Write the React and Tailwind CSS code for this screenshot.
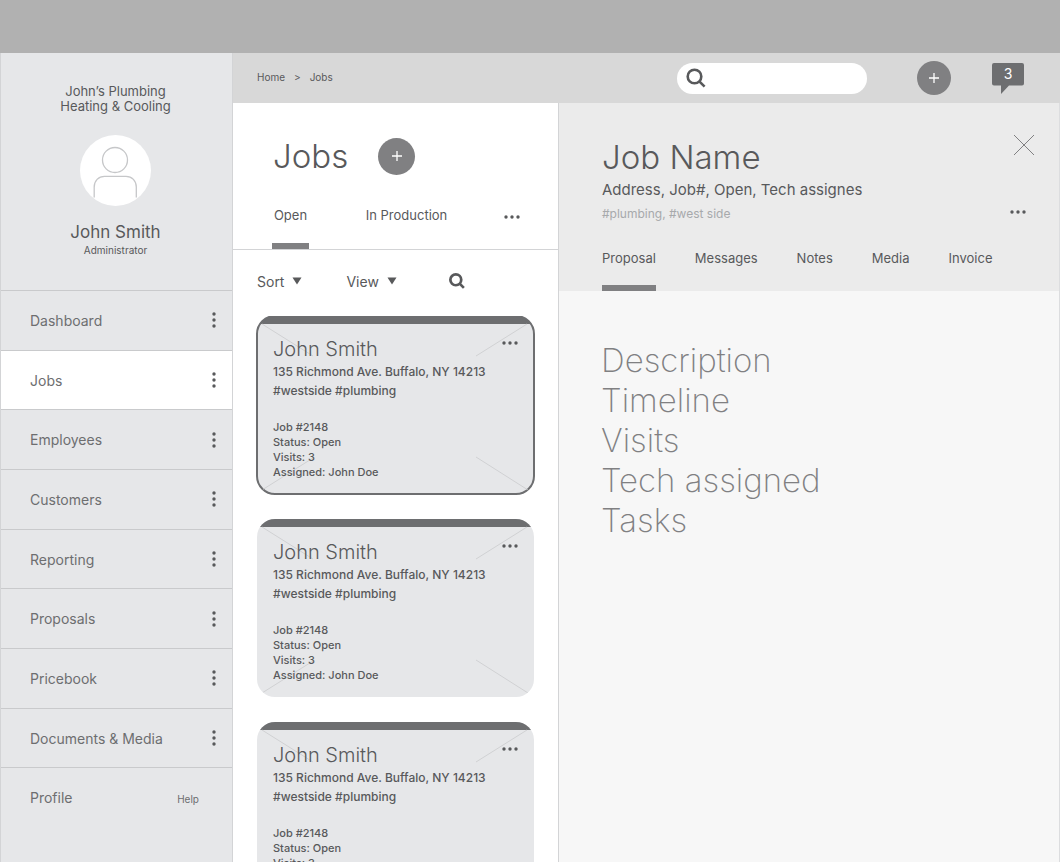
// App.jsx
import React from 'react';

const navItems = [
  'Dashboard',
  'Jobs',
  'Employees',
  'Customers',
  'Reporting',
  'Proposals',
  'Pricebook',
  'Documents & Media',
];

const jobs = [
  { id: 1, selected: true },
  { id: 2, selected: false },
  { id: 3, selected: false },
].map((job) => ({
  ...job,
  customer: 'John Smith',
  address: '135 Richmond Ave. Buffalo, NY 14213',
  tags: '#westside #plumbing',
  number: '#2148',
  status: 'Open',
  visits: 3,
  assigned: 'John Doe',
}));

const sections = ['Description', 'Timeline', 'Visits', 'Tech assigned', 'Tasks'];

const Dots = ({ vertical = false }) => (
  <svg
    className={vertical ? 'h-4 w-1' : 'h-1 w-4'}
    viewBox={vertical ? '0 0 4 16' : '0 0 16 4'}
    fill="currentColor"
    aria-hidden="true"
  >
    {[2, 8, 14].map((n) => (
      <circle key={n} cx={vertical ? 2 : n} cy={vertical ? n : 2} r="1.7" />
    ))}
  </svg>
);

const SearchIcon = ({ className, strokeWidth }) => (
  <svg
    className={className}
    viewBox="0 0 20 20"
    fill="none"
    stroke="currentColor"
    strokeWidth={strokeWidth}
    aria-hidden="true"
  >
    <circle cx="8.5" cy="8.5" r="6.8" />
    <path d="M13.3 13.3 L18.6 18.6" />
  </svg>
);

const PlusIcon = () => (
  <svg className="size-3" viewBox="0 0 12 12" stroke="currentColor" strokeWidth="1.3" aria-hidden="true">
    <path d="M6 1V11M1 6H11" />
  </svg>
);

const Caret = () => (
  <svg className="h-2 w-[10px]" viewBox="0 0 10 8" fill="currentColor" aria-hidden="true">
    <path d="M0.5 0.5H9.5L5 7.5Z" />
  </svg>
);

const Sidebar = () => (
  <aside className="w-[233px] shrink-0 border-x border-x-[#d3d4d6] bg-[#e6e7e9]">
    <div className="flex h-[237px] flex-col items-center pt-[31px] pr-0.5 text-center">
      <p className="text-[13px] leading-[15px]">
        John’s Plumbing
        <br />
        Heating &amp; Cooling
      </p>
      <svg className="mt-[21px] size-[71px]" viewBox="0 0 71 71" fill="none" aria-hidden="true">
        <circle cx="35.5" cy="35.5" r="35.5" fill="#fff" />
        <g stroke="#c6c7c9" strokeWidth="1.3">
          <circle cx="35" cy="25" r="12.5" />
          <path d="M14.2 62.5V52C14.2 46 18.5 41.3 24.5 41.3H46C52 41.3 56.3 46 56.3 52V62.5" />
        </g>
      </svg>
      <p className="mt-4 text-[17px] leading-5">John Smith</p>
      <p className="text-[10px] leading-4">Administrator</p>
    </div>
    <nav className="flex h-[537px] flex-col">
      {navItems.map((item) => (
        <div
          key={item}
          className={`flex flex-1 items-center justify-between border-t border-[#c9cacc] pr-4 pl-[29px] text-[#6d6e70] ${
            item === 'Jobs' ? 'bg-white' : ''
          }`}
        >
          <a href="#" className="text-[14px]">{item}</a>
          <button type="button" aria-label={`${item} options`} className="text-[#58595b]">
            <Dots vertical />
          </button>
        </div>
      ))}
      <div className="flex flex-1 items-center justify-between border-t border-[#c9cacc] pr-[33px] pl-[29px] text-[#6d6e70]">
        <a href="#" className="text-[14px]">Profile</a>
        <a href="#" className="pt-1 text-[10px]">Help</a>
      </div>
    </nav>
  </aside>
);

const Header = () => (
  <header className="flex h-[50px] shrink-0 items-center bg-[#d8d8d8] pr-9 pl-6">
    <div className="flex gap-[9px] pb-0.5 text-[10px]">
      <a href="#">Home</a>
      <span>&gt;</span>
      <a href="#">Jobs</a>
    </div>
    <label className="ml-auto flex h-[31px] w-[190px] items-center rounded-full bg-white pl-[9px]">
      <SearchIcon className="size-5" strokeWidth="2.6" />
      <input type="text" aria-label="Search" className="ml-2 w-36 text-[14px] outline-none" />
    </label>
    <button
      type="button"
      aria-label="Add"
      className="ml-[50px] flex size-[34px] items-center justify-center rounded-full bg-[#808082] text-white"
    >
      <PlusIcon />
    </button>
    <button type="button" className="relative ml-[41px] h-8 w-8 text-[14px] text-white">
      <svg className="absolute inset-0 size-8" viewBox="0 0 32 32" fill="#6d6e70" aria-hidden="true">
        <path d="M2 1H30Q32 1 32 3V21.5Q32 23.5 30 23.5H17L9 32V23.5H2Q0 23.5 0 21.5V3Q0 1 2 1Z" />
      </svg>
      <span className="relative block pb-2 leading-6">3</span>
    </button>
  </header>
);

const JobCard = ({ job }) => (
  <article
    className={`relative shrink-0 overflow-hidden rounded-[18px] bg-[#e6e7e9] ${
      job.selected ? 'outline-2 -outline-offset-1 outline-[#6d6e70]' : ''
    }`}
  >
    <div className="h-2 bg-[#6d6e70]" />
    <svg
      className="absolute inset-0 size-full"
      viewBox="0 0 277 178"
      preserveAspectRatio="none"
      stroke="#d0d1d3"
      fill="none"
      aria-hidden="true"
    >
      <path d="M5 8L56 40M270 8L219 40M5 174L56 142M271 174L219 141" />
    </svg>
    <div className="relative px-4 pt-[13px] pb-[14px] font-medium">
      <div className="flex items-start justify-between">
        <h3 className="text-[20px] leading-6 font-light">{job.customer}</h3>
        <button type="button" aria-label="Job options" className="flex h-3 items-center">
          <Dots />
        </button>
      </div>
      <div className="pt-px text-[12px] leading-[19px]">
        <p>{job.address}</p>
        <p>{job.tags}</p>
      </div>
      <div className="mt-5 text-[11px] leading-[15px]">
        <p>Job {job.number}</p>
        <p>Status: {job.status}</p>
        <p>Visits: {job.visits}</p>
        <p>Assigned: {job.assigned}</p>
      </div>
    </div>
  </article>
);

const JobList = () => (
  <section className="flex w-[326px] shrink-0 flex-col border-r border-[#d3d4d6] bg-white">
    <div className="h-[147px] shrink-0 border-b border-[#d3d4d6] pr-[38px] pl-[39px]">
      <div className="flex items-center gap-[30px] pt-[33px] pl-px">
        <h1 className="text-[33px] leading-10 font-light">Jobs</h1>
        <button
          type="button"
          aria-label="Add job"
          className="flex size-[37px] items-center justify-center rounded-full bg-[#808082] text-white"
        >
          <PlusIcon />
        </button>
      </div>
      <div className="mt-[29px] flex items-start justify-between text-[13px] leading-5">
        <button type="button" className="h-11 w-[37px] border-b-[6px] border-[#808082] pb-[18px]">
          Open
        </button>
        <button type="button">In Production</button>
        <button type="button" aria-label="More tabs" className="flex h-6 items-center">
          <Dots />
        </button>
      </div>
    </div>
    <div className="flex h-[66px] shrink-0 items-center pb-1 pl-6 text-[14px]">
      <button type="button" className="flex items-center gap-2">
        Sort <Caret />
      </button>
      <button type="button" className="ml-11 flex items-center gap-2">
        View <Caret />
      </button>
      <button type="button" aria-label="Search jobs" className="ml-[52px]">
        <SearchIcon className="size-4" strokeWidth="3.4" />
      </button>
    </div>
    <div className="flex min-h-0 flex-1 flex-col gap-[25px] overflow-hidden px-6">
      {jobs.map((job) => (
        <JobCard key={job.id} job={job} />
      ))}
    </div>
  </section>
);

const JobDetail = () => (
  <section className="flex min-w-0 flex-1 flex-col border-r border-[#dcdddf] bg-[#f7f7f7]">
    <div className="h-[188px] shrink-0 bg-[#ebebeb] pr-[25px] pl-[43px]">
      <div className="flex justify-between pt-8">
        <div>
          <h2 className="text-[33px] leading-[44px] font-light">Job Name</h2>
          <p className="pt-px text-[15px] leading-5">Address, Job#, Open, Tech assignes</p>
          <p className="pt-0.5 text-[12px] leading-6 text-[#a7a9ab]">#plumbing, #west side</p>
        </div>
        <div className="flex flex-col items-end">
          <button type="button" aria-label="Close">
            <svg className="size-5" viewBox="0 0 20 20" stroke="#808082" aria-hidden="true">
              <path d="M0 0L20 20M20 0L0 20" />
            </svg>
          </button>
          <button type="button" aria-label="Job options" className="mt-[55px] mr-2">
            <Dots />
          </button>
        </div>
      </div>
      <div className="mt-[22px] flex items-start gap-[39px] text-[13px] leading-5">
        <button type="button" className="h-[43px] border-b-[6px] border-[#808082] pb-[17px]">Proposal</button>
        <button type="button">Messages</button>
        <button type="button">Notes</button>
        <button type="button">Media</button>
        <button type="button">Invoice</button>
      </div>
    </div>
    <ul className="px-[42px] pt-[49px] text-[33px] leading-10 font-extralight text-[#808082]">
      {sections.map((section) => (
        <li key={section}>{section}</li>
      ))}
    </ul>
  </section>
);

export default function App() {
  return (
    <div className="flex h-screen flex-col overflow-hidden bg-white font-['Inter','Liberation_Sans',sans-serif] text-[#58595b]">
      <div className="h-[53px] shrink-0 bg-[#b1b1b1]" />
      <div className="flex min-h-0 flex-1">
        <Sidebar />
        <div className="flex min-w-0 flex-1 flex-col">
          <Header />
          <main className="flex min-h-0 flex-1">
            <JobList />
            <JobDetail />
          </main>
        </div>
      </div>
    </div>
  );
}
